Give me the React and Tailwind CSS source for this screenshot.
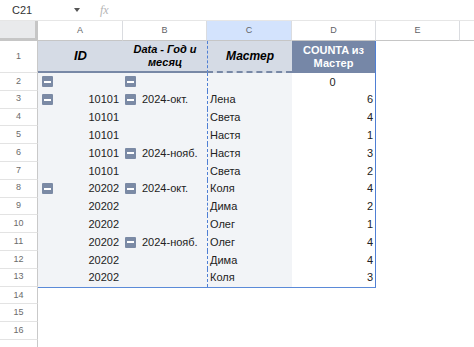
import React from 'react'

const COLS = ['A', 'B', 'C', 'D', 'E']

const ROWS = [
  { n: 2, aBtn: true, bBtn: true, d: '0', dCenter: true },
  { n: 3, aBtn: true, id: '10101', bBtn: true, date: '2024-окт.', name: 'Лена', d: '6' },
  { n: 4, id: '10101', name: 'Света', d: '4' },
  { n: 5, id: '10101', name: 'Настя', d: '1' },
  { n: 6, id: '10101', bBtn: true, date: '2024-нояб.', name: 'Настя', d: '3' },
  { n: 7, id: '10101', name: 'Света', d: '2' },
  { n: 8, aBtn: true, id: '20202', bBtn: true, date: '2024-окт.', name: 'Коля', d: '4' },
  { n: 9, id: '20202', name: 'Дима', d: '2' },
  { n: 10, id: '20202', name: 'Олег', d: '1' },
  { n: 11, id: '20202', bBtn: true, date: '2024-нояб.', name: 'Олег', d: '4' },
  { n: 12, id: '20202', name: 'Дима', d: '4' },
  { n: 13, id: '20202', name: 'Коля', d: '3' },
]

function Minus() {
  return (
    <span className="w-[11px] h-[11px] rounded-[1px] bg-[#7b8aa5] flex items-center justify-center shrink-0">
      <span className="w-[7px] h-[2px] bg-white" />
    </span>
  )
}

function RowHead({ n }) {
  return (
    <div className="w-[38px] shrink-0 h-full flex items-center justify-center text-[9px] text-[#6b6b6b] bg-white border-b border-[#e3e3e3] border-r border-r-[#c9c9c9]">
      {n}
    </div>
  )
}

export default function App() {
  return (
    <div className="w-[474px] h-[347px] overflow-hidden bg-white text-[#222]" style={{ fontFamily: '"Liberation Sans", Arial, sans-serif' }}>
      {/* formula bar */}
      <div className="h-[21px] flex items-center border-b border-[#e6e6e6]">
        <span className="ml-[12px] text-[11px] text-[#333] w-[40px]">C21</span>
        <span className="ml-[22px] w-0 h-0 border-l-[3px] border-r-[3px] border-t-[4px] border-l-transparent border-r-transparent border-t-[#555]" />
        <span className="ml-[20px] text-[12px] italic text-[#b5b5b5]" style={{ fontFamily: '"Liberation Serif", serif' }}>fx</span>
      </div>

      {/* column headers */}
      <div className="h-[20px] flex">
        <div className="w-[38px] shrink-0 bg-[#e9eaec] border-r-[3px] border-b-[3px] border-[#c6c6c6]" />
        {COLS.map((c, i) => (
          <div
            key={c}
            className={`${i === 1 || i === 3 || i === 4 ? 'w-[84px]' : 'w-[85px]'} shrink-0 flex items-center justify-center text-[9px] text-[#5f6368] border-r border-r-[#dadce0] border-b border-b-[#c6c6c6] ${c === 'C' ? 'bg-[#d3e3fd]' : 'bg-white'}`}
          >
            {c}
          </div>
        ))}
        <div className="flex-1 bg-white border-b border-b-[#c6c6c6]" />
      </div>

      {/* row 1: pivot header */}
      <div className="h-[32px] flex">
        <div className="w-[38px] shrink-0 flex items-center justify-center text-[9px] text-[#6b6b6b] border-b border-[#e3e3e3] border-r border-r-[#c9c9c9]">1</div>
        <div className="w-[85px] shrink-0 bg-[#d5dbe5] border-b-2 border-[#7888a6] flex items-center justify-center text-[13px] font-bold italic text-black">ID</div>
        <div className="w-[84px] shrink-0 bg-[#d5dbe5] border-b-2 border-[#7888a6] flex items-center justify-center text-center text-[11px] leading-[13px] font-bold italic text-black px-1">Data - Год и месяц</div>
        <div className="w-[85px] shrink-0 bg-[#d5dbe5] border-b-2 border-[#7888a6] border-l border-dashed border-l-[#4f7fd4] flex items-center justify-center text-[12px] font-bold italic text-black">Мастер</div>
        <div className="w-[84px] shrink-0 bg-[#7687a7] border-r border-r-[#4f7fd4] flex items-center justify-center text-center text-[11px] leading-[13px] font-bold text-white px-2">COUNTA из Мастер</div>
        <div className="flex-1" />
      </div>

      {/* data rows */}
      {ROWS.map(r => (
        <div key={r.n} className="h-[17.8px] flex text-[11px]">
          <RowHead n={r.n} />
          <div className="w-[85px] shrink-0 bg-[#f2f4f7] flex items-center pl-[4px] pr-[4px]">
            {r.aBtn ? <Minus /> : null}
            <span className="ml-auto">{r.id}</span>
          </div>
          <div className="w-[84px] shrink-0 bg-[#f2f4f7] flex items-center gap-[6px] pl-[2px]">
            {r.bBtn ? <Minus /> : null}
            <span>{r.date}</span>
          </div>
          <div className="w-[85px] shrink-0 bg-[#f2f4f7] border-l border-dashed border-l-[#4f7fd4] flex items-center pl-[2px]">
            {r.name}
          </div>
          <div className={`w-[84px] shrink-0 bg-white border-r border-r-[#4f7fd4] flex items-center pr-[2px] ${r.dCenter ? 'justify-center' : 'justify-end'}`}>
            {r.d}
          </div>
          <div className="flex-1" />
        </div>
      ))}

      {/* pivot bottom edge */}
      <div className="h-px flex">
        <div className="w-[38px] shrink-0 border-r border-r-[#c9c9c9]" />
        <div className="w-[338px] shrink-0 bg-[#5b8ad8]" />
      </div>

      {[14, 15, 16, ''].map((n, i) => (
        <div key={i} className={`${n === 14 ? 'h-[16.8px]' : 'h-[17.8px]'} flex`}>
          <RowHead n={n} />
          <div className="flex-1" />
        </div>
      ))}
    </div>
  )
}
